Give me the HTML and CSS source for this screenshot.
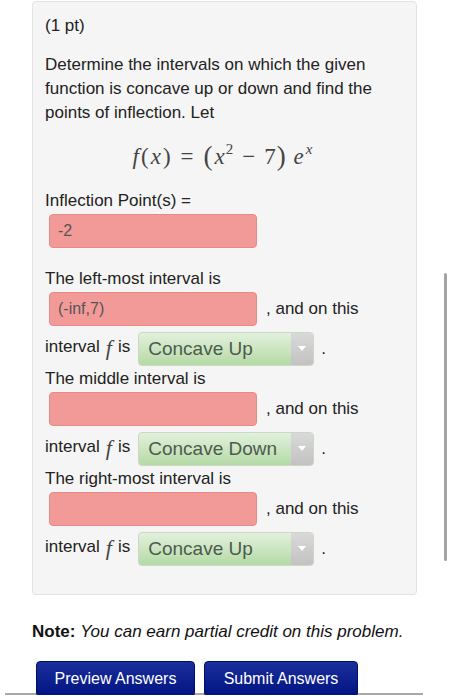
FILE: index.html
```html
<!DOCTYPE html>
<html lang="en">
<head>
  <meta charset="UTF-8" />
  <meta name="viewport" content="width=device-width, initial-scale=1.0"/>
  <title>Concavity</title>
  <link rel="stylesheet" href="styles.css">
</head>
<body>
  <div class="problem">
    <div class="pts">(1 pt)</div>
    <p class="text">Determine the intervals on which the given function is concave up or down and find the points of inflection. Let</p>
    <div class="formula">
      <i>f</i><span class="pr">(</span><i>x</i><span class="pr">)</span><span class="op">=</span><span class="pr big">(</span><i>x</i><sup>2</sup><span class="op">&minus;</span>7<span class="pr big">)</span> <i>e</i><sup><i>x</i></sup>
    </div>

    <div class="label first">Inflection Point(s) =</div>
    <div class="answer-row">
      <input class="answer wrong" value="-2" />
    </div>

    <div class="label gap">The left-most interval is</div>
    <div class="answer-row">
      <input class="answer wrong" value="(-inf,7)" />
      <span class="after">, and on this</span>
    </div>
    <div class="choice-row">
      <span class="word">interval</span><i class="fvar">f</i><span class="word">is</span>
      <div class="pick"><span>Concave Up</span><b class="arrow"></b></div>
      <span class="dot">.</span>
    </div>

    <div class="label">The middle interval is</div>
    <div class="answer-row">
      <input class="answer wrong" value="" />
      <span class="after">, and on this</span>
    </div>
    <div class="choice-row">
      <span class="word">interval</span><i class="fvar">f</i><span class="word">is</span>
      <div class="pick"><span>Concave Down</span><b class="arrow"></b></div>
      <span class="dot">.</span>
    </div>

    <div class="label">The right-most interval is</div>
    <div class="answer-row">
      <input class="answer wrong" value="" />
      <span class="after">, and on this</span>
    </div>
    <div class="choice-row">
      <span class="word">interval</span><i class="fvar">f</i><span class="word">is</span>
      <div class="pick"><span>Concave Up</span><b class="arrow"></b></div>
      <span class="dot">.</span>
    </div>
  </div>

  <div class="note"><b>Note:</b> <i>You can earn partial credit on this problem.</i></div>

  <div class="actions">
    <button class="btn preview">Preview Answers</button>
    <button class="btn submit">Submit Answers</button>
  </div>

  <div class="scrollbar"></div>
</body>
</html>
```

FILE: styles.css
```css
body {
  margin: 0;
  padding: 1px 0 0;
  font-family: 'Liberation Sans', Arial, sans-serif;
  font-size: 17px;
  color: #222;
  background: #fff;
}

.problem {
  margin-left: 32px;
  width: 385px;
  box-sizing: border-box;
  padding: 12px 12px 28px;
  background: #f5f5f5;
  border: 1px solid #e3e3e3;
  border-radius: 4px;
}

.pts {
  line-height: 24px;
}

.text {
  margin: 15px 0 0;
  line-height: 24px;
}

.formula {
  margin-top: 15px;
  height: 30px;
  line-height: 30px;
  text-align: center;
  font-family: 'Liberation Serif', 'Times New Roman', serif;
  font-size: 23px;
  color: #444;
  padding-right: 4px;
}

.formula i {
  margin: 0 1px;
}

.formula .pr {
  margin: 0 1px;
}

.formula .big {
  font-size: 27px;
  position: relative;
  top: 1px;
}

.formula .op {
  margin: 0 9px;
}

.formula sup {
  font-size: 15px;
  line-height: 0;
  vertical-align: 10px;
}

.label {
  height: 26px;
  line-height: 26px;
}

.label.first,
.label.gap {
  margin-top: 18px;
}

.answer-row {
  display: flex;
  align-items: center;
  height: 34px;
}

.answer {
  width: 208px;
  height: 34px;
  box-sizing: border-box;
  margin: 0 0 0 4px;
  padding: 0 8px;
  font-family: inherit;
  font-size: 16px;
  color: #555;
  border: 1px solid #e68a88;
  border-radius: 4px;
  outline: none;
}

.answer.wrong {
  background: #f29a98;
}

.after {
  margin-left: 9px;
}

.choice-row {
  display: flex;
  align-items: center;
  height: 34px;
  margin-top: 6px;
}

.word {
  position: relative;
  top: -2px;
}

.fvar {
  font-family: 'Liberation Serif', 'Times New Roman', serif;
  font-size: 22px;
  color: #444;
  margin: 0 6px 0 6px;
  position: relative;
  top: -1px;
}

.pick {
  display: flex;
  margin-left: 8px;
  width: 176px;
  height: 34px;
  box-sizing: border-box;
  border: 1px solid #cbd9c4;
  border-radius: 4px;
  background: linear-gradient(to bottom, #e2f1dc, #b4daa6);
  overflow: hidden;
}

.pick span {
  flex: 1;
  padding-left: 9px;
  line-height: 32px;
  font-size: 19px;
  color: #4d5a4d;
}

.pick .arrow {
  width: 22px;
  position: relative;
  background: linear-gradient(to bottom, #d9d9d9, #c2c2c2);
}

.pick .arrow::after {
  content: "";
  position: absolute;
  left: 7px;
  top: 13px;
  border-left: 4px solid transparent;
  border-right: 4px solid transparent;
  border-top: 5px solid #fff;
}

.dot {
  margin-left: 7px;
}

.note {
  margin: 25px 0 0 32px;
  line-height: 24px;
  color: #111;
}

.actions {
  display: flex;
  align-items: flex-start;
  gap: 9px;
  margin: 17px 0 0 5px;
  padding-left: 31px;
  width: 418px;
  height: 34px;
  box-sizing: border-box;
  border-bottom: 2px solid #a9a9a9;
}

.btn {
  flex: none;
  height: 36px;
  padding: 0;
  font-family: inherit;
  font-size: 16px;
  color: #fff;
  background: linear-gradient(to bottom, #1b2f9c, #001382);
  border: 1px solid #000e66;
  border-radius: 4px;
}

.preview { width: 159px; }
.submit { width: 154px; }

.scrollbar {
  position: absolute;
  top: 273px;
  left: 444px;
  width: 3px;
  height: 288px;
  background: #a3a3a3;
  border-radius: 2px;
}
```
